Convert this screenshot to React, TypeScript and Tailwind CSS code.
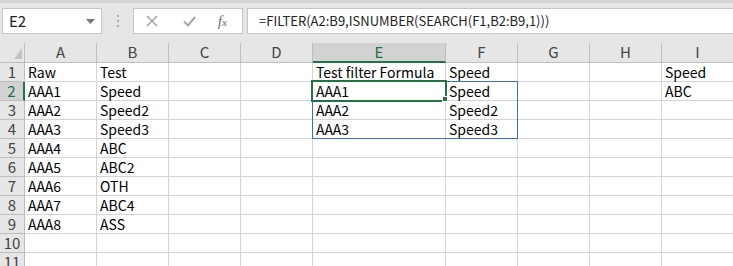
import React from "react";

const COLS = ["A", "B", "C", "D", "E", "F", "G", "H", "I"];

const DATA: Record<number, Record<string, string>> = {
  1: { A: "Raw", B: "Test", E: "Test filter Formula", F: "Speed", I: "Speed" },
  2: { A: "AAA1", B: "Speed", E: "AAA1", F: "Speed", I: "ABC" },
  3: { A: "AAA2", B: "Speed2", E: "AAA2", F: "Speed2" },
  4: { A: "AAA3", B: "Speed3", E: "AAA3", F: "Speed3" },
  5: { A: "AAA4", B: "ABC" },
  6: { A: "AAA5", B: "ABC2" },
  7: { A: "AAA6", B: "OTH" },
  8: { A: "AAA7", B: "ABC4" },
  9: { A: "AAA8", B: "ASS" },
  10: {},
  11: {},
};

const font = { fontFamily: '"Noto Sans CJK SC", "Noto Sans", sans-serif' };

function FormulaBar() {
  return (
    <div className="h-[43px] bg-[#e6e6e6] border-t-[3px] border-[#d5d5d5] flex items-start pt-[5px] pl-[2px]">
      <div className="w-[100px] h-[26px] bg-white border border-[#c6c6c6] flex items-center justify-between pl-[6px] pr-[6px]">
        <span className="text-[15px] text-[#222]">E2</span>
        <svg width="9" height="5" viewBox="0 0 9 5">
          <path d="M0 0h9L4.5 5z" fill="#777" />
        </svg>
      </div>
      <div className="w-[31px] h-[26px] flex flex-col items-center justify-center gap-[3px]">
        <span className="w-[2px] h-[2px] bg-[#a8a8a8]" />
        <span className="w-[2px] h-[2px] bg-[#a8a8a8]" />
        <span className="w-[2px] h-[2px] bg-[#a8a8a8]" />
      </div>
      <div className="w-[110px] h-[26px] bg-white border border-[#c6c6c6] flex items-center">
        <svg className="ml-[12px]" width="12" height="12" viewBox="0 0 12 12">
          <path d="M1 1l10 10M11 1L1 11" stroke="#a6a6a6" strokeWidth="1.6" />
        </svg>
        <svg className="ml-[25px]" width="13" height="11" viewBox="0 0 13 11">
          <path d="M1 5.5l4 4L12 1" stroke="#a6a6a6" strokeWidth="2" fill="none" />
        </svg>
        <span
          className="ml-[22px] text-[14px] italic text-[#666]"
          style={{ fontFamily: '"Liberation Serif", serif' }}
        >
          f<span className="text-[11px]">x</span>
        </span>
      </div>
      <div className="ml-[4px] flex-1 h-[26px] bg-white border border-[#c6c6c6] border-r-0 flex items-center pl-[11px]">
        <span className="text-[13px] text-[#222]">=FILTER(A2:B9,ISNUMBER(SEARCH(F1,B2:B9,1)))</span>
      </div>
    </div>
  );
}

function Grid() {
  const rows = Object.keys(DATA).map(Number);
  return (
    <div className="relative grid grid-cols-[25px_72px_72px_72px_72px_133px_72px_72px_72px_72px_1fr]">
      <div className="h-[20px] bg-[#e6e6e6] border-r border-b border-[#bdbdbd] flex items-end justify-end pr-[2px] pb-[3px]">
        <svg width="8" height="11" viewBox="0 0 8 11">
          <path d="M8 0v11H0z" fill="#c3c3c3" />
        </svg>
      </div>
      {COLS.map((c) => (
        <div
          key={c}
          className={
            c === "E"
              ? "h-[20px] bg-[#d2d2d2] border-r border-[#bdbdbd] border-b-2 border-b-[#217346] flex items-center justify-center text-[15px] text-[#217346]"
              : "h-[20px] bg-[#e6e6e6] border-r border-b border-[#bdbdbd] flex items-center justify-center text-[15px] text-[#444]"
          }
        >
          {c}
        </div>
      ))}
      <div className="h-[20px] bg-[#e6e6e6] border-b border-[#bdbdbd]" />
      {rows.map((r) => (
        <React.Fragment key={r}>
          <div
            className={
              r === 2
                ? "h-[19px] bg-[#d2d2d2] border-r-2 border-r-[#217346] border-b border-b-[#bdbdbd] flex items-center justify-center text-[15px] text-[#217346]"
                : "h-[19px] bg-[#e6e6e6] border-r border-b border-[#bdbdbd] flex items-center justify-center text-[15px] text-[#444]"
            }
          >
            {r}
          </div>
          {COLS.map((c) => (
            <div
              key={c}
              className="h-[19px] border-r border-b border-[#d4d4d4] pl-[3px] flex items-end overflow-visible whitespace-nowrap text-[14px] leading-[18px] text-black"
            >
              {DATA[r][c] ?? ""}
            </div>
          ))}
          <div className="h-[19px] border-b border-[#d4d4d4]" />
        </React.Fragment>
      ))}
      <div className="absolute left-[312px] top-[38px] w-[206px] h-[58px] border border-[#3d6fc6] pointer-events-none" />
      <div className="absolute left-[311px] top-[37px] w-[136px] h-[22px] border-2 border-[#217346] pointer-events-none" />
      <div className="absolute left-[442px] top-[53px] w-[6px] h-[6px] bg-[#217346] border border-white pointer-events-none" />
    </div>
  );
}

export default function App() {
  return (
    <div className="w-[733px] h-[266px] overflow-hidden bg-white" style={font}>
      <FormulaBar />
      <Grid />
    </div>
  );
}
